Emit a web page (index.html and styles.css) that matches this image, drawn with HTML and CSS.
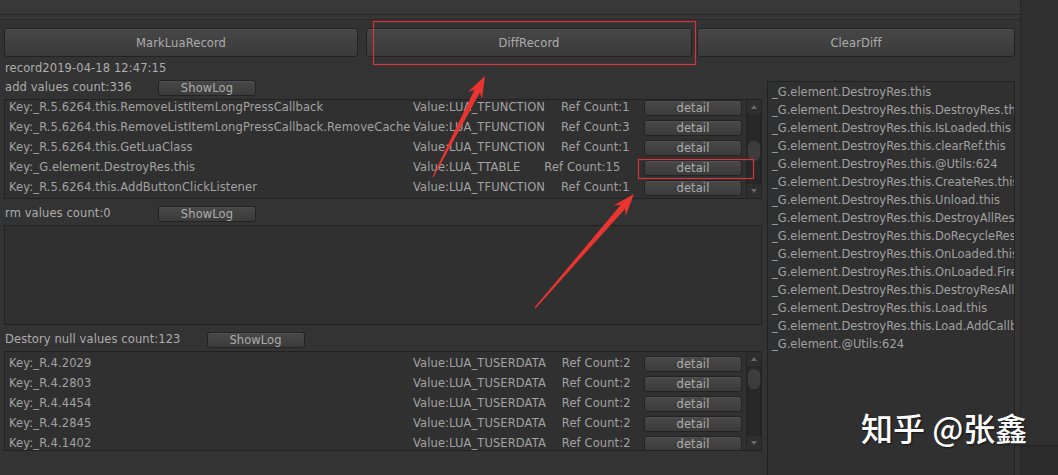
FILE: index.html
```html
<!DOCTYPE html>
<html lang="zh">
<head>
    <meta charset="UTF-8">
    <meta name="viewport" content="width=device-width, initial-scale=1.0">
    <title>LuaRecord</title>
    <link rel="stylesheet" href="styles.css">
</head>
<body>
    <div id="screen">
        <div class="window">
            <div class="topbar"></div>
            <div class="tabline"></div>
            <div class="toolbar">
                <button class="btn btn-mark">MarkLuaRecord</button>
                <button class="btn btn-diff">DiffRecord</button>
                <button class="btn btn-clear">ClearDiff</button>
            </div>
            <div class="content">
                <div class="left">
                    <p class="stamp">record2019-04-18 12:47:15</p>

                    <div class="head">
                        <span class="label">add values count:336</span>
                        <button class="small-btn">ShowLog</button>
                    </div>
                    <div class="list">
                        <ul class="rows">
                            <li><span class="key">Key:_R.5.6264.this.RemoveListItemLongPressCallback</span><span class="val">Value:LUA_TFUNCTION</span><span class="ref">Ref Count:1</span><button class="small-btn">detail</button></li>
                            <li><span class="key">Key:_R.5.6264.this.RemoveListItemLongPressCallback.RemoveCache</span><span class="val">Value:LUA_TFUNCTION</span><span class="ref">Ref Count:3</span><button class="small-btn">detail</button></li>
                            <li><span class="key">Key:_R.5.6264.this.GetLuaClass</span><span class="val">Value:LUA_TFUNCTION</span><span class="ref">Ref Count:1</span><button class="small-btn">detail</button></li>
                            <li><span class="key">Key:_G.element.DestroyRes.this</span><span class="val">Value:LUA_TTABLE</span><span class="ref wide">Ref Count:15</span><button class="small-btn">detail</button></li>
                            <li><span class="key">Key:_R.5.6264.this.AddButtonClickListener</span><span class="val">Value:LUA_TFUNCTION</span><span class="ref">Ref Count:1</span><button class="small-btn">detail</button></li>
                        </ul>
                        <div class="scroll scroll-a">
                            <div class="arrow up"></div>
                            <div class="track"><div class="thumb"></div></div>
                            <div class="arrow down"></div>
                        </div>
                    </div>

                    <div class="head">
                        <span class="label">rm values count:0</span>
                        <button class="small-btn">ShowLog</button>
                    </div>
                    <div class="list"></div>

                    <div class="head">
                        <span class="label">Destory null values count:123</span>
                        <button class="small-btn">ShowLog</button>
                    </div>
                    <div class="list">
                        <ul class="rows shifted">
                            <li><span class="key">Key:_R.4.2029</span><span class="val">Value:LUA_TUSERDATA</span><span class="ref">Ref Count:2</span><button class="small-btn">detail</button></li>
                            <li><span class="key">Key:_R.4.2803</span><span class="val">Value:LUA_TUSERDATA</span><span class="ref">Ref Count:2</span><button class="small-btn">detail</button></li>
                            <li><span class="key">Key:_R.4.4454</span><span class="val">Value:LUA_TUSERDATA</span><span class="ref">Ref Count:2</span><button class="small-btn">detail</button></li>
                            <li><span class="key">Key:_R.4.2845</span><span class="val">Value:LUA_TUSERDATA</span><span class="ref">Ref Count:2</span><button class="small-btn">detail</button></li>
                            <li><span class="key">Key:_R.4.1402</span><span class="val">Value:LUA_TUSERDATA</span><span class="ref">Ref Count:2</span><button class="small-btn">detail</button></li>
                        </ul>
                        <div class="scroll scroll-b">
                            <div class="arrow up"></div>
                            <div class="track"><div class="thumb"></div></div>
                            <div class="arrow down"></div>
                        </div>
                    </div>
                </div>

                <ul class="trace">
                    <li>_G.element.DestroyRes.this</li>
                    <li>_G.element.DestroyRes.this.DestroyRes.this</li>
                    <li>_G.element.DestroyRes.this.IsLoaded.this</li>
                    <li>_G.element.DestroyRes.this.clearRef.this</li>
                    <li>_G.element.DestroyRes.this.@Utils:624</li>
                    <li>_G.element.DestroyRes.this.CreateRes.this</li>
                    <li>_G.element.DestroyRes.this.Unload.this</li>
                    <li>_G.element.DestroyRes.this.DestroyAllRes.this</li>
                    <li>_G.element.DestroyRes.this.DoRecycleRes.this</li>
                    <li>_G.element.DestroyRes.this.OnLoaded.this</li>
                    <li>_G.element.DestroyRes.this.OnLoaded.FireEvent.this</li>
                    <li>_G.element.DestroyRes.this.DestroyResAll.this</li>
                    <li>_G.element.DestroyRes.this.Load.this</li>
                    <li>_G.element.DestroyRes.this.Load.AddCallback.this</li>
                    <li>_G.element.@Utils:624</li>
                </ul>
            </div>
        </div>
        <div class="side">
            <div class="side-low"></div>
        </div>

        <!-- annotations drawn over the screenshot -->
        <svg class="marks" width="1058" height="475" viewBox="0 0 1058 475">
            <rect x="373.5" y="21.5" width="322" height="43" fill="none" stroke="#d6343c" stroke-width="1.2"/>
            <rect x="638.5" y="159.5" width="115" height="19" fill="none" stroke="#d6343c" stroke-width="1.2"/>
            <polygon fill="#ea3430" points="485,76 482,99.2 479.9,92.5 433.5,177.3 432.5,176.7 474.5,89.7 467.8,91.9"/>
            <polygon fill="#ea3430" points="634,194 625.6,215.9 625.1,208.8 535.5,308.4 534.5,307.6 620.6,204.9 613.5,205.4"/>
        </svg>
        <div class="watermark">知乎 @张鑫</div>
    </div>
</body>
</html>
```

FILE: styles.css
```css
* {
    margin: 0;
    padding: 0;
    box-sizing: border-box;
}
li {
    list-style: none;
}
body {
    background: #333;
    font-family: "DejaVu Sans", Verdana, sans-serif;
    font-size: 11.5px;
    letter-spacing: 0.1px;
    color: #a2a2a2;
}
button {
    font-family: inherit;
    font-size: inherit;
    letter-spacing: inherit;
    cursor: pointer;
}
#screen {
    position: relative;
    display: flex;
    width: 1058px;
    height: 475px;
    overflow: hidden;
}
.window {
    display: flex;
    flex-direction: column;
    width: 1021px;
    height: 475px;
    background: #333;
    border-right: 1px solid #262626;
}
.topbar {
    height: 15px;
    background: #383838;
    border-bottom: 1px solid #272727;
}
.tabline {
    height: 5px;
    background: #363636;
    border-bottom: 1px solid #2a2a2a;
}
.toolbar {
    display: flex;
    padding: 8px 0 0 4px;
}
.btn {
    height: 29px;
    border: 1px solid #222;
    border-radius: 3px;
    background: linear-gradient(#474747, #3a3a3a);
    color: #acacac;
    box-shadow: inset 0 1px 0 #505050;
}
.btn-mark {
    width: 354px;
}
.btn-diff {
    width: 326px;
    margin-left: 8px;
}
.btn-clear {
    width: 318px;
    margin-left: 5px;
}
.content {
    display: flex;
    flex: 1;
}
.left {
    width: 762px;
    padding-left: 4px;
}
.stamp {
    margin-top: 2px;
    height: 18px;
    line-height: 18px;
    padding-left: 1px;
    color: #adadad;
}
.head {
    display: flex;
    align-items: center;
    height: 22px;
    padding-left: 1px;
}
.list + .head {
    margin-top: 4px;
}
.head .label {
    min-width: 153px;
    padding-right: 26px;
    margin-top: -3px;
    color: #adadad;
    white-space: nowrap;
}
.small-btn {
    width: 98px;
    height: 16px;
    border: 1px solid #232323;
    border-radius: 3px;
    background: linear-gradient(#484848, #3b3b3b);
    color: #acacac;
    line-height: 14px;
    box-shadow: inset 0 1px 0 #505050;
}
.list {
    display: flex;
    height: 100px;
    border: 1px solid #222;
    background: #303030;
    overflow: hidden;
}
.rows {
    flex: 1;
}
.rows.shifted {
    padding-top: 4px;
}
.rows li {
    display: flex;
    align-items: flex-start;
    height: 20px;
    padding: 0 4px;
    line-height: 15px;
    white-space: nowrap;
}
.rows .key {
    width: 404px;
    overflow: hidden;
}
.rows .ref {
    margin-left: 16px;
}
.rows .ref.wide {
    margin-left: 24px;
}
.rows .small-btn {
    margin-left: auto;
}
.scroll {
    display: flex;
    flex-direction: column;
    width: 15px;
    background: #2a2a2a;
    border-left: 1px solid #242424;
}
.arrow {
    position: relative;
    height: 14px;
    background: #2e2e2e;
}
.arrow::after {
    content: "";
    position: absolute;
    left: 4px;
    top: 5px;
    border-left: 3px solid transparent;
    border-right: 3px solid transparent;
}
.arrow.up::after {
    border-bottom: 4px solid #6a6a6a;
}
.arrow.down::after {
    border-top: 4px solid #6a6a6a;
}
.track {
    flex: 1;
    background: #282828;
    border-left: 1px solid #232323;
    border-right: 1px solid #232323;
}
.thumb {
    height: 22px;
    margin: 0 -1px;
    border: 1px solid #2a2a2a;
    border-radius: 7px;
    background: #3d3d3d;
}
.scroll-a .thumb {
    margin-top: 26px;
}
.scroll-b .thumb {
    margin-top: 2px;
}
.trace {
    width: 248px;
    margin: 24px 0 0 5px;
    padding: 1px 0 0 4px;
    border: 1px solid #222;
    border-bottom: 0;
    background: #303030;
    letter-spacing: 0;
    overflow: hidden;
}
.trace li {
    height: 18px;
    line-height: 18px;
    white-space: nowrap;
    color: #a0a0a0;
}
.side {
    display: flex;
    flex-direction: column;
    justify-content: flex-end;
    flex: 1;
    background: #303030;
}
.side-low {
    height: 30px;
    border-top: 1px solid #242424;
    background: #2c2c2c;
}
.marks {
    position: absolute;
    left: 0;
    top: 0;
    pointer-events: none;
}
.watermark {
    position: absolute;
    left: 861px;
    top: 404px;
    font-family: "Noto Sans CJK SC", sans-serif;
    font-size: 32px;
    font-weight: 500;
    letter-spacing: 0;
    color: #fff;
    text-shadow: 1px 1px 2px rgba(0,0,0,0.6);
    white-space: nowrap;
}
```
